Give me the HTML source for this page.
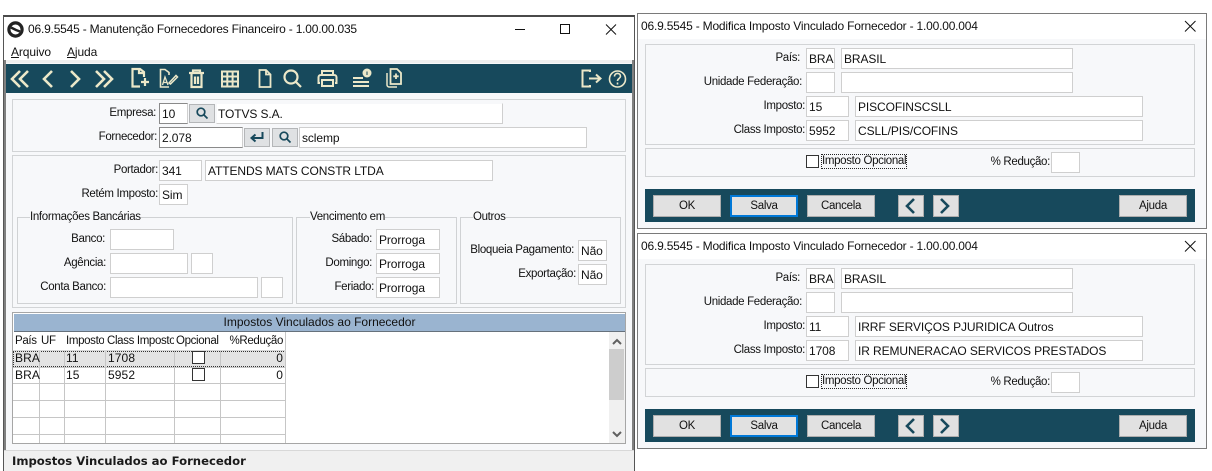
<!DOCTYPE html>
<html lang="pt"><head><meta charset="utf-8"><title>Fornecedores</title>
<style>
html,body{margin:0;padding:0;background:#fff}
#r{position:relative;width:1212px;height:471px;overflow:hidden;background:#fff;font:12px "Liberation Sans",sans-serif;color:#111}
#r div,#r span,#r svg{position:absolute;box-sizing:border-box}
.p{background:#f7f8fa;border:1px solid #d2d4d6}
.i{background:#fff;border:1px solid #cfcfcf;padding-left:2px;height:21px;line-height:20px;letter-spacing:-.1px;color:#111;white-space:nowrap}
.d{border-color:#8a8a8a #cfcfcf #8a8a8a #8a8a8a}
.l{white-space:nowrap;height:20px;line-height:20px;font-size:11.5px;letter-spacing:-.33px}
.t{white-space:nowrap;height:20px;line-height:20px;font-size:12px;letter-spacing:-.2px}
.b{background:#dfe1e3;border:1px solid #b4b6b8}
.g{border:1px solid #d0d2d4}
.lg{background:#f7f8fa;padding:0;height:14px;line-height:14px;white-space:nowrap;font-size:11.5px;letter-spacing:-.33px}
.tb{background:#e1e1e1;border:1px solid #adadad;height:22px;top:0;line-height:20px;text-align:center;width:68px;font-size:11.5px;letter-spacing:-.3px}
.h{background:#17495c}
.c{top:0;height:18px;line-height:18px;white-space:nowrap;font-size:11.5px;letter-spacing:-.35px}
.v{top:0;line-height:17px;height:17px;letter-spacing:.1px;white-space:nowrap}
.hl{left:13px;width:273px;height:1px;background:#c6c6c6}
.vl{top:332px;height:111px;width:1px;background:#c6c6c6}
</style></head><body><div id="r">

<!-- main window -->
<div style="left:3px;top:15px;width:632px;height:456px;background:#fff;border-top:2px solid #4a4a4a;border-right:1px solid #555;border-left:1px solid #555"></div>
<div style="left:4px;top:61px;width:630px;height:410px;background:#f7f8fa"></div>
<div style="left:4px;top:60px;width:630px;height:3px;background:#eee"></div>
<div style="left:4px;top:60px;width:2px;height:391px;background:#808080"></div>
<div style="left:632px;top:60px;width:2px;height:391px;background:#808080"></div>
<div style="left:4px;top:450px;width:630px;height:21px;background:#f0f0f0;border-top:1px solid #d8d8d8"></div>

<svg style="left:7px;top:21px" width="17" height="17" viewBox="0 0 17 17"><circle cx="8.5" cy="8.5" r="6.6" fill="none" stroke="#222" stroke-width="3.2"/><path d="M4 6.5 L9 9 L13 10.5" fill="none" stroke="#222" stroke-width="2.4"/></svg>
<div class="t" style="left:28px;top:19px">06.9.5545 - Manutenção Fornecedores Financeiro - 1.00.00.035</div>
<div class="l" style="left:11px;top:42px;font-size:12px;letter-spacing:-.1px"><u>A</u>rquivo</div>
<div class="l" style="left:67px;top:42px;font-size:12px;letter-spacing:-.1px"><u>A</u>juda</div>
<svg style="left:510px;top:20px" width="115" height="20" viewBox="0 0 115 20" fill="none" stroke="#111"><path d="M5 9.5H15"/><rect x="50.5" y="4.5" width="9" height="9"/><path d="M96 4.500L106 14.500M106 4.500L96 14.500"/></svg>

<!-- toolbar -->
<div class="h" style="left:6px;top:64px;width:626px;height:29px"></div>
<svg style="left:6px;top:64px" width="626" height="29" viewBox="0 0 626 29" fill="none" stroke="#ece8c9" stroke-width="2.2">
<path d="M14 7L6 15L14 23M22 7L14 15L22 23" stroke-width="2.6"/>
<path d="M46 7L38 15L46 23" stroke-width="2.6"/>
<path d="M65 7L73 15L65 23" stroke-width="2.6"/>
<path d="M90 7L98 15L90 23M98 7L106 15L98 23" stroke-width="2.6"/>
<path d="M138 13V8L134 5H126.500V22.500H134M135 18H143M139 14V22M133 5V9H138"/>
<path d="M163 11V8.500L159 5.500H154.500V23H163" stroke-width="1.600"/><path d="M156.500 21L159 13L162 21M157.500 18.500H161" stroke-width="1.300"/><path d="M163 19L170 11.500L171.500 13L164.500 20Z" stroke-width="1.500"/>
<path d="M183 9H198M187 9V6.500H194V9M185.500 9V23H195.500V9M189 12.500V20M192 12.500V20"/>
<path d="M216 7.500H232V22.500H216ZM216 12.500H232M216 17.500H232M221.300 7.500V22.500M226.600 7.500V22.500" stroke-width="2"/>
<path d="M253.500 6H260L264.500 10.500V23H253.500ZM260 6V10.500H264.500" stroke-width="1.800"/>
<circle cx="285" cy="13" r="6.500"/><path d="M290 18L295 23"/>
<path d="M316 11V7H327V11M314 19H312.500V13C312.500 11.500 314 11 315 11H328C329 11 330.500 11.500 330.500 13V19H329M316 16H327V22H316Z" stroke-width="2"/>
<path d="M347 14H357M347 18H363M347 22H363" stroke-width="2"/><circle cx="361" cy="9" r="4.500" fill="#ece8c9" stroke="none"/><path d="M361 7.500V11" stroke="#17495c" stroke-width="1"/>
<path d="M381 9V21C381 22 382 23 383 23H391" stroke-width="1.500"/><path d="M384.500 5H391L395 9V20H384.500ZM390 9.500V15M387.300 12.300H392.700" stroke-width="1.800"/>
<path d="M584 8V6.500H576.500V22.500H584V21M583 14.500H594M590 10.500L594.500 14.500L590 18.500" stroke-width="2"/>
<circle cx="611.500" cy="15" r="8" stroke-width="1.600"/><path d="M608.500 12.500C608.500 8.500 614.500 8.500 614.500 12.300C614.500 14.500 611.500 14.500 611.500 17" stroke-width="1.600"/><path d="M611.500 18.500V20.500" stroke-width="1.600"/>
</svg>

<!-- panel 1 -->
<div class="p" style="left:12px;top:99px;width:614px;height:53px"></div>
<div class="l" style="right:1056px;top:103px">Empresa:</div>
<div class="i d" style="left:159px;top:103px;width:29px">10</div>
<div class="b" style="left:189px;top:104px;width:26px;height:19px"></div>
<svg style="left:189px;top:104px" width="26" height="19" fill="none" stroke="#17495c" stroke-width="1.700"><circle cx="12" cy="8" r="3.800"/><path d="M15 11L18.500 14.500"/></svg>
<div class="i" style="left:216px;top:103px;width:287px;padding-left:1px;border-top-color:#f7f8fa;border-left-color:#f7f8fa">TOTVS S.A.</div>
<div class="l" style="right:1055px;top:127px">Fornecedor:</div>
<div class="i d" style="left:159px;top:127px;width:84px">2.078</div>
<div class="b" style="left:244px;top:128px;width:26px;height:19px"></div>
<svg style="left:244px;top:128px" width="26" height="19" fill="none" stroke="#17495c" stroke-width="2"><path d="M18.500 4V10H8M11.500 6.500L7.500 10L11.500 13.500"/></svg>
<div class="b" style="left:272px;top:128px;width:26px;height:19px"></div>
<svg style="left:272px;top:128px" width="26" height="19" fill="none" stroke="#17495c" stroke-width="1.700"><circle cx="12" cy="8" r="3.800"/><path d="M15 11L18.500 14.500"/></svg>
<div class="i" style="left:299px;top:127px;width:288px">sclemp</div>

<!-- panel 2 -->
<div class="p" style="left:12px;top:155px;width:614px;height:153px"></div>
<div class="l" style="right:1054px;top:160px">Portador:</div>
<div class="i" style="left:159px;top:160px;width:43px">341</div>
<div class="i" style="left:205px;top:160px;width:288px">ATTENDS MATS CONSTR LTDA</div>
<div class="l" style="right:1054px;top:184px">Retém Imposto:</div>
<div class="i" style="left:159px;top:184px;width:29px">Sim</div>

<div class="g" style="left:17px;top:217px;width:276px;height:87px"></div>
<div class="lg" style="left:30px;top:210px">Informações Bancárias</div>
<div class="l" style="right:1107px;top:229px">Banco:</div>
<div class="i" style="left:110px;top:229px;width:64px"></div>
<div class="l" style="right:1106px;top:253px">Agência:</div>
<div class="i" style="left:110px;top:253px;width:78px"></div>
<div class="i" style="left:191px;top:253px;width:22px"></div>
<div class="l" style="right:1106px;top:277px">Conta Banco:</div>
<div class="i" style="left:110px;top:277px;width:148px"></div>
<div class="i" style="left:261px;top:277px;width:22px"></div>

<div class="g" style="left:296px;top:217px;width:161px;height:87px"></div>
<div class="lg" style="left:310px;top:210px">Vencimento em</div>
<div class="l" style="right:840px;top:229px">Sábado:</div>
<div class="i" style="left:376px;top:229px;width:64px">Prorroga</div>
<div class="l" style="right:840px;top:253px">Domingo:</div>
<div class="i" style="left:376px;top:253px;width:64px">Prorroga</div>
<div class="l" style="right:838px;top:277px">Feriado:</div>
<div class="i" style="left:376px;top:277px;width:64px">Prorroga</div>

<div class="g" style="left:460px;top:217px;width:161px;height:87px"></div>
<div class="lg" style="left:473px;top:210px">Outros</div>
<div class="l" style="right:638px;top:240px">Bloqueia Pagamento:</div>
<div class="i" style="left:578px;top:240px;width:29px">Não</div>
<div class="l" style="right:636px;top:264px">Exportação:</div>
<div class="i" style="left:578px;top:264px;width:29px">Não</div>

<!-- table -->
<div style="left:12px;top:312px;width:614px;height:132px;background:#fff;border:1px solid #a6a6a6"></div>
<div style="left:14px;top:314px;width:611px;height:18px;background:#9ab4d0;border-bottom:1px solid #66717c;line-height:17px;text-align:center">Impostos Vinculados ao Fornecedor</div>
<div style="left:13px;top:351px;width:273px;height:16px;background:#e3e3e3;border:1px dotted #333"></div>
<div class="hl" style="top:383px"></div><div class="hl" style="top:367px"></div>
<div class="hl" style="top:400px"></div><div class="hl" style="top:417px"></div><div class="hl" style="top:434px"></div>
<div class="vl" style="left:39px;top:351px;height:92px"></div><div class="vl" style="left:64px;top:351px;height:92px"></div>
<div class="vl" style="left:105px;top:351px;height:92px"></div><div class="vl" style="left:174px;top:351px;height:92px"></div>
<div class="vl" style="left:220px;top:351px;height:92px"></div><div class="vl" style="left:285px;top:332px"></div>
<div class="hl" style="top:350px;background:#d8d8d8"></div>
<div class="c" style="left:15px;top:332px">País</div>
<div class="c" style="left:41px;top:332px">UF</div>
<div class="c" style="left:66px;top:332px;width:38px;overflow:hidden">Imposto</div>
<div class="c" style="left:107px;top:332px;width:67px;overflow:hidden">Class Imposto</div>
<div class="c" style="left:176px;top:332px">Opcional</div>
<div class="c" style="right:929px;top:332px">%Redução</div>
<div class="v" style="left:15px;top:350px">BRA</div><div class="v" style="left:66px;top:350px">11</div><div class="v" style="left:108px;top:350px">1708</div>
<div class="v" style="right:929px;top:350px">0</div>
<div style="left:192px;top:351px;width:13px;height:13px;border:1px solid #333;background:#fff"></div>
<div class="v" style="left:15px;top:367px">BRA</div><div class="v" style="left:66px;top:367px">15</div><div class="v" style="left:108px;top:367px">5952</div>
<div class="v" style="right:929px;top:367px">0</div>
<div style="left:192px;top:368px;width:13px;height:13px;border:1px solid #333;background:#fff"></div>
<div style="left:609px;top:332px;width:16px;height:111px;background:#f0f0f0"></div>
<div style="left:609px;top:349px;width:15px;height:51px;background:#cdcdcd"></div>
<svg style="left:609px;top:332px" width="16" height="111" fill="none" stroke="#606060" stroke-width="2"><path d="M4 12L8 8L12 12M4 100L8 104L12 100"/></svg>
<div style="left:12px;top:454px;height:16px;line-height:16px;font:bold 11.65px 'DejaVu Sans',sans-serif;white-space:nowrap;color:#1a1a1a">Impostos Vinculados ao Fornecedor</div>

<!-- dialog 1 -->
<div style="left:637px;top:13px;width:570px;height:216px;background:#f7f8fa;border:1px solid #7a7a7a"></div>
<div style="left:638px;top:14px;width:568px;height:25px;background:#fff"></div>
<div class="t" style="left:641px;top:16px">06.9.5545 - Modifica Imposto Vinculado Fornecedor - 1.00.00.004</div>
<svg style="left:1183px;top:19px" width="14" height="14" fill="none" stroke="#111"><path d="M2 2L12.500 12.500M12.500 2L2 12.500"/></svg>
<div class="p" style="left:645px;top:44px;width:550px;height:101px"></div>
<div class="l" style="right:412px;top:48px">País:</div>
<div class="i" style="left:806px;top:48px;width:29px">BRA</div>
<div class="i" style="left:841px;top:48px;width:232px">BRASIL</div>
<div class="l" style="right:410px;top:72px">Unidade Federação:</div>
<div class="i" style="left:806px;top:72px;width:29px"></div>
<div class="i" style="left:841px;top:72px;width:232px"></div>
<div class="l" style="right:407px;top:96px">Imposto:</div>
<div class="i" style="left:806px;top:96px;width:43px">15</div>
<div class="i" style="left:855px;top:96px;width:288px">PISCOFINSCSLL</div>
<div class="l" style="right:407px;top:120px">Class Imposto:</div>
<div class="i" style="left:806px;top:120px;width:43px">5952</div>
<div class="i" style="left:855px;top:120px;width:288px">CSLL/PIS/COFINS</div>
<div class="p" style="left:645px;top:148px;width:550px;height:29px"></div>
<div style="left:806px;top:155px;width:13px;height:13px;background:#fff;border:1px solid #333"></div>
<div class="l" style="left:821px;top:154px;width:86px;height:15px;line-height:13px;border:1px dotted #222;padding-left:0">Imposto Opcional</div>
<div class="l" style="right:162px;top:152px">% Redução:</div>
<div class="i" style="left:1051px;top:152px;width:29px"></div>
<div class="h" style="left:645px;top:189px;width:550px;height:33px"></div>
<div class="tb" style="left:653px;top:195px">OK</div>
<div class="tb" style="left:730px;top:195px;border:2px solid #0078d7;line-height:18px">Salva</div>
<div class="tb" style="left:807px;top:195px">Cancela</div>
<div class="tb" style="left:898px;top:195px;width:26px"></div>
<div class="tb" style="left:933px;top:195px;width:26px"></div>
<svg style="left:898px;top:195px" width="61" height="22" fill="none" stroke="#17495c" stroke-width="2.600"><path d="M16 4L9 11L16 18M43 4L50 11L43 18"/></svg>
<div class="tb" style="left:1119px;top:195px">Ajuda</div>

<!-- dialog 2 -->
<div style="left:637px;top:233px;width:570px;height:216px;background:#f7f8fa;border:1px solid #7a7a7a"></div>
<div style="left:638px;top:234px;width:568px;height:25px;background:#fff"></div>
<div class="t" style="left:641px;top:236px">06.9.5545 - Modifica Imposto Vinculado Fornecedor - 1.00.00.004</div>
<svg style="left:1183px;top:239px" width="14" height="14" fill="none" stroke="#111"><path d="M2 2L12.500 12.500M12.500 2L2 12.500"/></svg>
<div class="p" style="left:645px;top:264px;width:550px;height:101px"></div>
<div class="l" style="right:412px;top:268px">País:</div>
<div class="i" style="left:806px;top:268px;width:29px">BRA</div>
<div class="i" style="left:841px;top:268px;width:232px">BRASIL</div>
<div class="l" style="right:410px;top:292px">Unidade Federação:</div>
<div class="i" style="left:806px;top:292px;width:29px"></div>
<div class="i" style="left:841px;top:292px;width:232px"></div>
<div class="l" style="right:407px;top:316px">Imposto:</div>
<div class="i" style="left:806px;top:316px;width:43px">11</div>
<div class="i" style="left:855px;top:316px;width:288px">IRRF SERVIÇOS PJURIDICA Outros</div>
<div class="l" style="right:407px;top:340px">Class Imposto:</div>
<div class="i" style="left:806px;top:340px;width:43px">1708</div>
<div class="i" style="left:855px;top:340px;width:288px">IR REMUNERACAO SERVICOS PRESTADOS</div>
<div class="p" style="left:645px;top:368px;width:550px;height:29px"></div>
<div style="left:806px;top:375px;width:13px;height:13px;background:#fff;border:1px solid #333"></div>
<div class="l" style="left:821px;top:374px;width:86px;height:15px;line-height:13px;border:1px dotted #222">Imposto Opcional</div>
<div class="l" style="right:162px;top:372px">% Redução:</div>
<div class="i" style="left:1051px;top:372px;width:29px"></div>
<div class="h" style="left:645px;top:409px;width:550px;height:33px"></div>
<div class="tb" style="left:653px;top:415px">OK</div>
<div class="tb" style="left:730px;top:415px;border:2px solid #0078d7;line-height:18px">Salva</div>
<div class="tb" style="left:807px;top:415px">Cancela</div>
<div class="tb" style="left:898px;top:415px;width:26px"></div>
<div class="tb" style="left:933px;top:415px;width:26px"></div>
<svg style="left:898px;top:415px" width="61" height="22" fill="none" stroke="#17495c" stroke-width="2.600"><path d="M16 4L9 11L16 18M43 4L50 11L43 18"/></svg>
<div class="tb" style="left:1119px;top:415px">Ajuda</div>

</div></body></html>
